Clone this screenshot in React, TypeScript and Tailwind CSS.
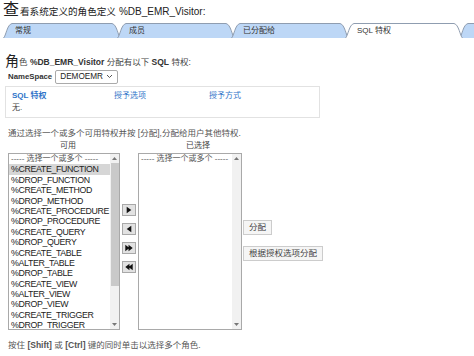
import React from "react";

const PRIVS = [
  "%CREATE_FUNCTION",
  "%DROP_FUNCTION",
  "%CREATE_METHOD",
  "%DROP_METHOD",
  "%CREATE_PROCEDURE",
  "%DROP_PROCEDURE",
  "%CREATE_QUERY",
  "%DROP_QUERY",
  "%CREATE_TABLE",
  "%ALTER_TABLE",
  "%DROP_TABLE",
  "%CREATE_VIEW",
  "%ALTER_VIEW",
  "%DROP_VIEW",
  "%CREATE_TRIGGER",
  "%DROP_TRIGGER",
];

const TABS = ["常规", "成员", "已分配给", "SQL 特权", ""];

function Tab({ label, active, first }: { label: string; active?: boolean; first?: boolean }) {
  return (
    <div className={`relative h-[15px] w-[118px] shrink-0 ${first ? "" : "-ml-[4px]"} ${active ? "z-10" : ""}`}>
      <svg className="absolute inset-0" width="118" height="15" viewBox="0 0 118 15">
        <path
          d="M0.5 15 C3 13 4 1.5 9 0.5 L109 0.5 C114 1.5 115 13 117.5 15"
          fill={active ? "#ffffff" : "#bdd7f6"}
          stroke="#8f9db0"
          strokeWidth="1"
        />
      </svg>
      <span className="relative block pl-[12px] text-[8px] leading-[16px] text-[#333]">{label}</span>
    </div>
  );
}

function ScrollArrow({ down }: { down?: boolean }) {
  return (
    <svg width="5" height="3" viewBox="0 0 5 3">
      <path d={down ? "M0 0 L5 0 L2.5 3 Z" : "M0 3 L5 3 L2.5 0 Z"} fill="#777" />
    </svg>
  );
}

function MoveButton({ kind }: { kind: "r" | "l" | "rr" | "ll" }) {
  const d = {
    r: "M4 2.5 L9 6 L4 9.5 Z",
    l: "M9 2.5 L4 6 L9 9.5 Z",
    rr: "M2.5 2.5 L7 6 L2.5 9.5 Z M6 2.5 L10.5 6 L6 9.5 Z",
    ll: "M10.5 2.5 L6 6 L10.5 9.5 Z M7 2.5 L2.5 6 L7 9.5 Z",
  }[kind];
  return (
    <div className="flex h-[12px] w-[14px] items-center justify-center border border-[#a8a8a8] bg-[#e2e2e2]">
      <svg width="13" height="12" viewBox="0 0 13 12">
        <path d={d} fill="#111" />
      </svg>
    </div>
  );
}

function ListBox({ items, selected, thumb, width }: { items: string[]; selected?: number; thumb?: boolean; width: string }) {
  return (
    <div className={`flex h-[177px] ${width} shrink-0 border border-[#a9a9a9] bg-white`}>
      <div className="min-w-0 flex-1 overflow-hidden">
        <div className="h-[10.4px] whitespace-nowrap pl-[2px] text-[8px] leading-[10.4px] text-[#555]">
          ----- 选择一个或多个 -----
        </div>
        {items.map((it, i) => (
          <div
            key={it}
            className={`h-[10.4px] whitespace-nowrap pl-[2px] text-[8.8px] leading-[10.4px] tracking-[-0.35px] text-[#222] ${
              i === selected ? "bg-[#d6d6d6]" : ""
            }`}
          >
            {it}
          </div>
        ))}
      </div>
      <div className="flex w-[9px] shrink-0 flex-col items-center bg-[#f1f1f1]">
        <div className="flex h-[9px] items-center">
          <ScrollArrow />
        </div>
        <div className="flex-1 self-stretch px-[0.5px]">
          {thumb && <div className="h-[123px] bg-[#c9c9c9]" />}
        </div>
        <div className="flex h-[9px] items-center">
          <ScrollArrow down />
        </div>
      </div>
    </div>
  );
}

export default function App() {
  return (
    <div
      className="h-[356px] w-[474px] overflow-hidden bg-white text-[#333]"
      style={{ fontFamily: '"Liberation Sans", "Noto Sans CJK SC", sans-serif' }}
    >
      {/* Title */}
      <div className="flex h-[20px] items-end pl-[3px] pb-[2px]">
        <span className="text-[16px] leading-[17px] text-[#222]">查</span>
        <span className="pl-[1px] text-[9.6px] leading-[13px] text-[#222]">看系统定义的角色定义</span>
        <span className="pl-[3px] text-[10px] leading-[13px] text-[#222]">%DB_EMR_Visitor:</span>
      </div>

      {/* Tabs */}
      <div className="mt-[3px] flex pl-[3px]">
        {TABS.map((t, i) => (
          <Tab key={i} label={t} first={i === 0} active={i === 3} />
        ))}
      </div>

      {/* Heading */}
      <div className="mt-[16px] flex h-[15px] items-end pl-[5px]">
        <span className="text-[14px] leading-[15px] text-[#222]">角</span>
        <span className="pb-[1px] text-[8.5px] leading-[11px] text-[#444]">
          色 <b className="font-semibold text-[#333]">%DB_EMR_Visitor</b> 分配有以下 <b className="font-semibold text-[#333]">SQL</b> 特权:
        </span>
      </div>

      {/* Namespace */}
      <div className="flex h-[15px] items-center pl-[8px]">
        <span className="text-[7.8px] font-bold text-[#333]">NameSpace</span>
        <div className="ml-[3px] flex h-[14px] w-[63px] shrink-0 items-center justify-between rounded-[2px] border border-[#aaa] pl-[4px] pr-[4px]">
          <span className="whitespace-nowrap text-[8.2px] leading-[12px] text-[#222]">DEMOEMR</span>
          <svg className="shrink-0" width="7" height="5" viewBox="0 0 7 5">
            <path d="M1 1 L3.5 3.5 L6 1" fill="none" stroke="#555" strokeWidth="1" />
          </svg>
        </div>
      </div>

      {/* Info box */}
      <div className="ml-[5px] mt-[2px] h-[32px] w-[315px] border border-[#e2e2e2] pl-[6px] pt-[3px]">
        <div className="flex h-[12px] items-center text-[8px] text-[#2f74c9]">
          <span className="w-[102px] font-semibold">SQL 特权</span>
          <span className="w-[95px]">授予选项</span>
          <span>授予方式</span>
        </div>
        <div className="h-[12px] text-[8px] leading-[12px] text-[#444]">无.</div>
      </div>

      {/* Instruction */}
      <div className="mt-[10px] h-[10px] pl-[8px] text-[8.5px] leading-[10px] text-[#555]">
        通过选择一个或多个可用特权并按 [分配],分配给用户其他特权.
      </div>

      {/* Labels */}
      <div className="mt-[2px] flex h-[12px] items-center text-[8px] text-[#444]">
        <span className="w-[128px] pl-[8px] text-center">可用</span>
        <span className="w-[108px] pl-[32px] text-center">已选择</span>
      </div>

      {/* Lists */}
      <div className="mt-[1px] flex pl-[8px]">
        <ListBox items={PRIVS} selected={0} thumb width="w-[112px]" />
        <div className="flex w-[18px] shrink-0 flex-col items-center pt-[51px]">
          <div className="flex flex-col gap-[7px]">
            <MoveButton kind="r" />
            <MoveButton kind="l" />
            <MoveButton kind="rr" />
            <MoveButton kind="ll" />
          </div>
        </div>
        <ListBox items={[]} width="w-[104px]" />
        <div className="ml-[1px] flex flex-col items-start gap-[11px] pt-[67px]">
          <button className="h-[15px] border border-[#ccc] bg-[#f5f5f5] px-[5px] text-[8.5px] leading-[13px] text-[#444]">
            分配
          </button>
          <button className="h-[15px] border border-[#ccc] bg-[#f5f5f5] px-[5px] text-[8.5px] leading-[13px] text-[#444]">
            根据授权选项分配
          </button>
        </div>
      </div>

      {/* Footer note */}
      <div className="mt-[10px] pl-[8px] text-[8.5px] leading-[10px] text-[#555]">
        按住 <b className="font-semibold">[Shift]</b> 或 <b className="font-semibold">[Ctrl]</b> 键的同时单击以选择多个角色.
      </div>
    </div>
  );
}
